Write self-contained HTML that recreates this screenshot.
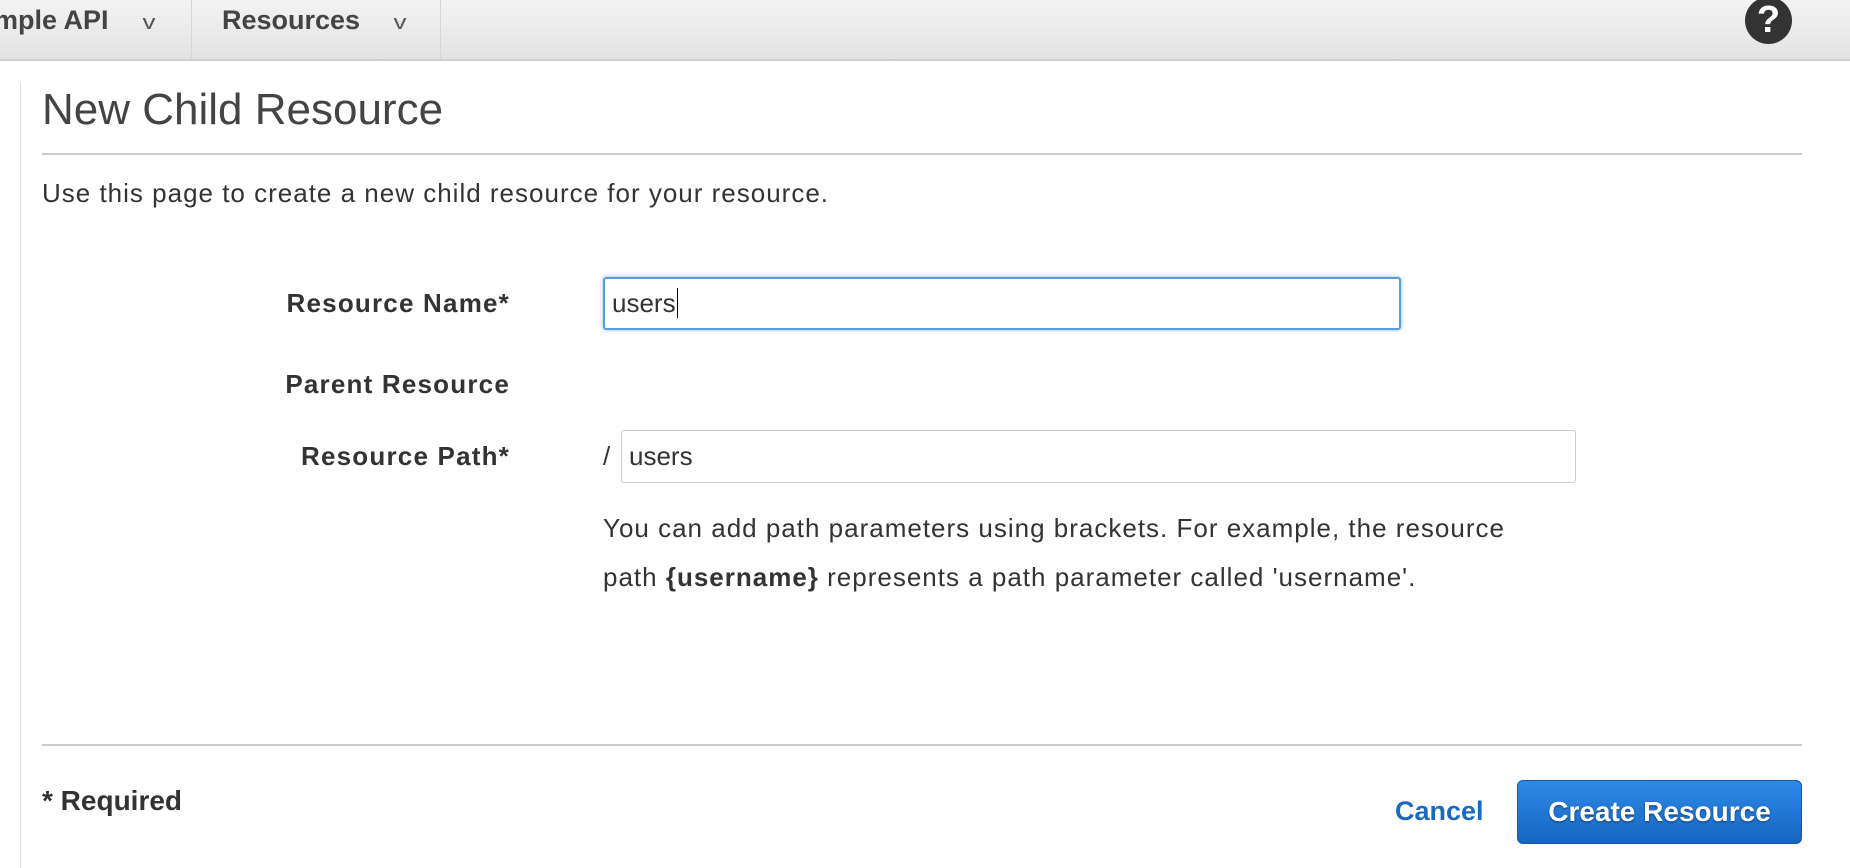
<!DOCTYPE html>
<html><head><meta charset="utf-8"><style>
*{margin:0;padding:0;box-sizing:border-box}
body{width:1850px;height:868px;background:#fff;font-family:"Liberation Sans",Arial,sans-serif;color:#333;position:relative;overflow:hidden}
.hdr{position:absolute;left:0;top:0;width:1850px;height:61px;background:linear-gradient(#f3f3f3,#e3e3e3);border-bottom:2px solid #cfcfcf}
.hdr .t{position:absolute;top:5px;font-size:27px;font-weight:bold;color:#444}
.hdr .c{position:absolute;top:12px;font-size:20px;color:#555;transform:scaleX(1.3)}
.hdr .d{position:absolute;top:0;width:1px;height:59px;background:#d6d6d6}
.help{position:absolute;left:1745px;top:-3px;width:47px;height:47px;border-radius:50%;background:#333;color:#fff;font-weight:bold;font-size:38px;text-align:center;line-height:47px}
.lb{position:absolute;left:20px;top:83px;width:1px;height:785px;background:#ddd}
.abs{position:absolute;white-space:nowrap}
.lab{position:absolute;right:1340px;font-size:26px;letter-spacing:1.2px;font-weight:bold;color:#333}
.inp{position:absolute;border:1px solid #ccc;border-radius:3px;font-size:26px;padding-left:7px}
</style></head><body>
<div class="hdr">
<div class="t" style="left:-6px">mple API</div><div class="c" style="left:144px">v</div>
<div class="d" style="left:191px"></div>
<div class="t" style="left:222px">Resources</div><div class="c" style="left:395px">v</div>
<div class="d" style="left:440px"></div>
<div class="help">?</div>
</div>
<div class="lb"></div>
<div class="abs" style="left:42px;top:85px;font-size:44px;color:#444">New Child Resource</div>
<div class="abs" style="left:42px;top:153px;width:1760px;height:2px;background:#ccc"></div>
<div class="abs" style="left:42px;top:178px;font-size:26px;letter-spacing:1px;color:#333">Use this page to create a new child resource for your resource.</div>
<div class="lab" style="top:288px">Resource Name*</div>
<div class="inp" style="left:603px;top:277px;width:798px;height:53px;border:2px solid #5a9be0;box-shadow:0 0 4px #8ab8ea;line-height:48px">users<span style="border-left:1px solid #000;margin-left:1px"></span></div>
<div class="lab" style="top:369px">Parent Resource</div>
<div class="lab" style="top:441px">Resource Path*</div>
<div class="abs" style="left:603px;top:441px;font-size:26px">/</div>
<div class="inp" style="left:621px;top:430px;width:955px;height:53px;line-height:51px">users</div>
<div class="abs" style="left:603px;top:504px;font-size:26px;letter-spacing:1px;line-height:49px">You can add path parameters using brackets. For example, the resource<br>path <b>{username}</b> represents a path parameter called 'username'.</div>
<div class="abs" style="left:42px;top:744px;width:1760px;height:2px;background:#ccc"></div>
<div class="abs" style="left:42px;top:785px;font-size:28px;font-weight:bold">* Required</div>
<div class="abs" style="left:1395px;top:796px;font-size:27px;font-weight:bold;color:#1a6ac0">Cancel</div>
<div class="abs" style="left:1517px;top:780px;width:285px;height:64px;border-radius:6px;background:linear-gradient(#2e8ae6,#1566c2);border:1px solid #1558a8;color:#fff;font-size:28px;font-weight:bold;text-align:center;line-height:62px;text-shadow:0 1px 2px rgba(0,0,0,.5)">Create Resource</div>
</body></html>
